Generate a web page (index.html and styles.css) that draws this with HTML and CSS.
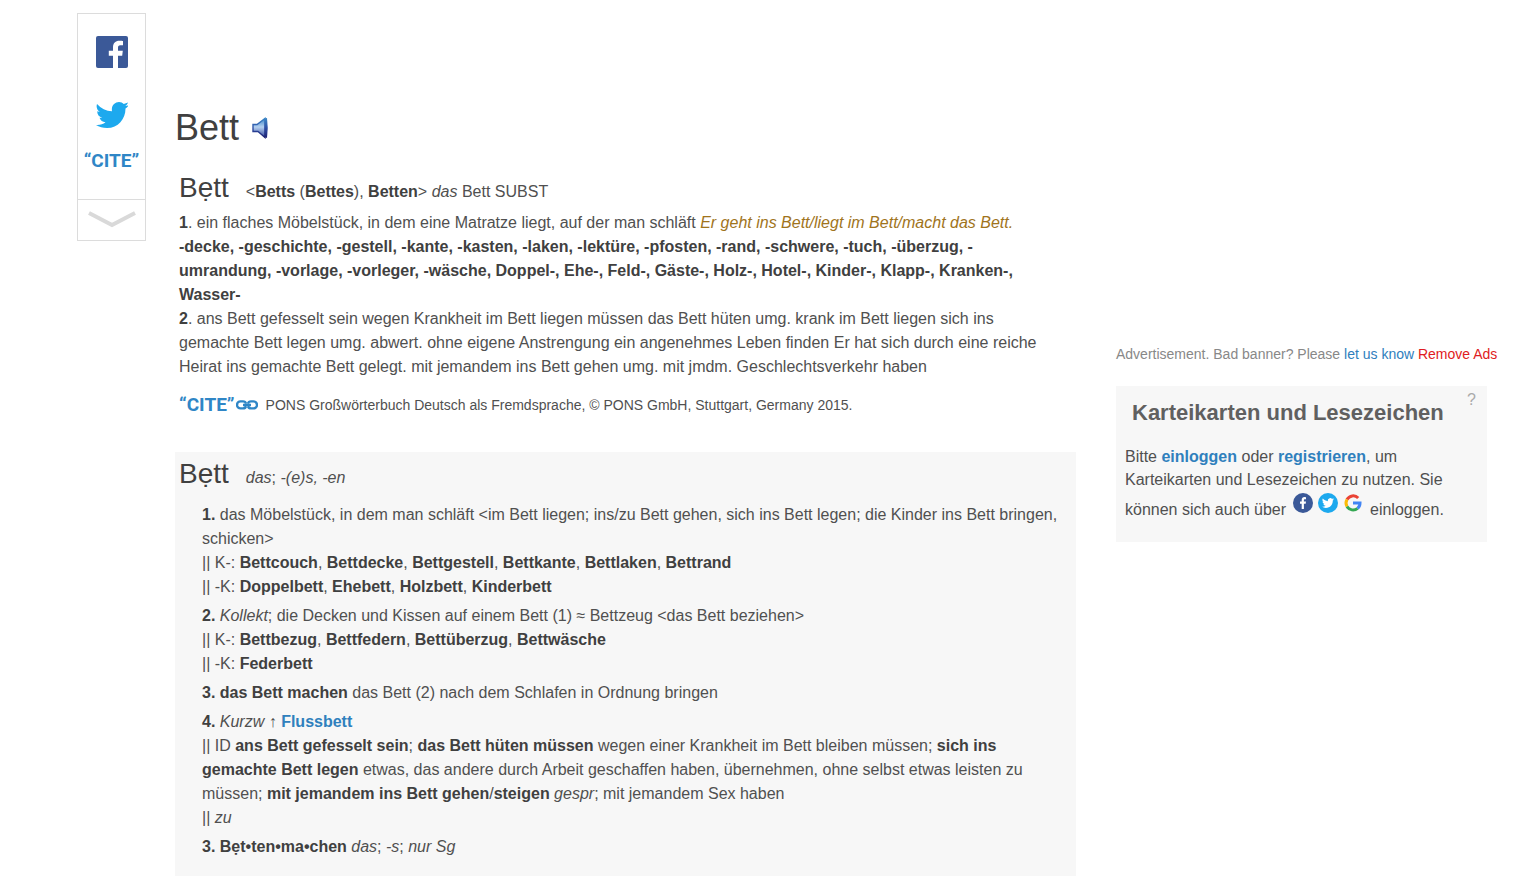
FILE: index.html
```html
<!DOCTYPE html>
<html lang="de">
<head>
<meta charset="utf-8">
<meta name="viewport" content="width=device-width, initial-scale=1">
<title>Bett</title>
<link rel="stylesheet" href="styles.css">
</head>
<body>
<svg width="0" height="0" class="defs" aria-hidden="true">
  <symbol id="bird" viewBox="0 0 24 24"><path d="M23.95 4.57a10 10 0 0 1-2.82.77 4.96 4.96 0 0 0 2.16-2.72c-.95.55-2 .96-3.13 1.18a4.92 4.92 0 0 0-8.38 4.48C7.69 8.1 4.07 6.13 1.64 3.16a4.93 4.93 0 0 0 1.52 6.57 4.9 4.9 0 0 1-2.23-.61v.06a4.92 4.92 0 0 0 3.95 4.83 5 5 0 0 1-2.21.08 4.94 4.94 0 0 0 4.6 3.42A9.87 9.87 0 0 1 0 19.54a14 14 0 0 0 7.55 2.21c9.05 0 14-7.5 14-13.98 0-.21 0-.42-.02-.63a9.94 9.94 0 0 0 2.42-2.57z"/></symbol>
</svg>
<div class="page">
  <nav class="share" aria-label="Teilen">
    <div class="share-main">
      <a href="#" class="share-link facebook" aria-label="Facebook"><svg width="32" height="32" viewBox="0 0 32 32"><rect width="32" height="32" rx="2" fill="#3b5998"/><path fill="#fff" d="M22 32V19.700h4.200l.6-4.900H22v-3.100c0-1.400.4-2.400 2.400-2.400H27V5c-.4-.1-2-.2-3.700-.2-3.700 0-6.300 2.300-6.300 6.400v3.600h-4.200v4.900H17V32z"/></svg></a>
      <a href="#" class="share-link twitter" aria-label="Twitter"><svg width="32" height="32" viewBox="0 0 32 32" fill="#1da9ee"><path d="M1 5c4 4.600 9 7 15 7.200C15 6.500 19 3 23 3c2 0 3.500.7 4.800 2L32 3.500c-.5 1.600-1.400 2.700-2.700 3.500l3.200-.6c-.8 1.300-1.700 2.200-3 3C29.500 20 22 29 11 29 6.800 29 3.200 28 0 26c3.800.3 7-.7 9.500-2.700-3-.2-5-1.800-6-4.500h2.700C3 18 1.200 15.500 1.200 12.300l2.600.8C1 11 0 8 1 5z"/></svg></a>
      <a href="#" class="cite">“CITE”</a>
    </div>
    <button class="share-more" aria-label="Mehr"><svg width="48" height="18" viewBox="0 0 48 18"><path d="M1 2l23 12L47 2" fill="none" stroke="#d9d9d9" stroke-width="4"/></svg></button>
  </nav>

  <main class="content">
    <h1 class="title">Bett <button class="sound" aria-label="Aussprache anhören"><svg width="17" height="22" viewBox="0 0 17 22"><defs><linearGradient id="spk" x1="0" y1="0" x2="0" y2="1"><stop offset="0" stop-color="#3b86c8"/><stop offset=".45" stop-color="#b4d0f0"/><stop offset="1" stop-color="#33469c"/></linearGradient><linearGradient id="rim" x1="0" y1="0" x2="0" y2="1"><stop offset="0" stop-color="#3a86c6"/><stop offset=".5" stop-color="#2f4fa5"/><stop offset="1" stop-color="#1b1f70"/></linearGradient></defs><path d="M1 7.500h4L13 1.500v19l-7-6H1z" fill="url(#spk)" stroke="url(#rim)" stroke-width="1.400"/><path d="M12.500 1.500L15 1q1.500 10 0 20l-2.500-1z" fill="url(#rim)"/></svg></button></h1>

    <section class="entry">
      <div class="entry-head"><h2 class="word">Bẹtt</h2><span>&lt;<b>Betts</b> (<b>Bettes</b>), <b>Betten</b>&gt; <i>das</i> Bett SUBST</span></div>
      <p class="sense"><b>1</b>. ein flaches Möbelstück, in dem eine Matratze liegt, auf der man schläft <i class="example">Er geht ins Bett/liegt im Bett/macht das Bett.</i><br>
      <b>-decke, -geschichte, -gestell, -kante, -kasten, -laken, -lektüre, -pfosten, -rand, -schwere, -tuch, -überzug, -<br>umrandung, -vorlage, -vorleger, -wäsche, Doppel-, Ehe-, Feld-, Gäste-, Holz-, Hotel-, Kinder-, Klapp-, Kranken-,<br>Wasser-</b></p>
      <p class="sense"><b>2</b>. ans Bett gefesselt sein wegen Krankheit im Bett liegen müssen das Bett hüten umg. krank im Bett liegen sich ins<br>gemachte Bett legen umg. abwert. ohne eigene Anstrengung ein angenehmes Leben finden Er hat sich durch eine reiche<br>Heirat ins gemachte Bett gelegt. mit jemandem ins Bett gehen umg. mit jmdm. Geschlechtsverkehr haben</p>
      <div class="source"><a href="#" class="cite">“CITE”</a><a href="#" class="chain" aria-label="Link"><svg width="22" height="10" viewBox="0 0 22 10" fill="none" stroke="#2f86c6" stroke-width="2.400"><path d="M10 3.500C9.600 2 8.500 1.400 7 1.400H4.500a3.500 3.500 0 0 0 0 7H7c1.500 0 2.600-.7 3-2M12 3.500c.4-1.500 1.500-2.100 3-2.100h2.500a3.500 3.500 0 0 1 0 7H15c-1.500 0-2.600-.7-3-2M7 5h8"/></svg></a><span>PONS Großwörterbuch Deutsch als Fremdsprache, © PONS GmbH, Stuttgart, Germany 2015.</span></div>
    </section>

    <section class="entry shaded">
      <div class="entry-head"><h2 class="word">Bẹtt</h2><span><i>das</i>; <i>-(e)s, -en</i></span></div>
      <div class="senses">
        <p class="sense"><b>1.</b> das Möbelstück, in dem man schläft &lt;im Bett liegen; ins/zu Bett gehen, sich ins Bett legen; die Kinder ins Bett bringen,<br>schicken&gt;<br>
        || K-: <b>Bettcouch</b>, <b>Bettdecke</b>, <b>Bettgestell</b>, <b>Bettkante</b>, <b>Bettlaken</b>, <b>Bettrand</b><br>
        || -K: <b>Doppelbett</b>, <b>Ehebett</b>, <b>Holzbett</b>, <b>Kinderbett</b></p>
        <p class="sense"><b>2.</b> <i>Kollekt</i>; die Decken und Kissen auf einem Bett (1) ≈ Bettzeug &lt;das Bett beziehen&gt;<br>
        || K-: <b>Bettbezug</b>, <b>Bettfedern</b>, <b>Bettüberzug</b>, <b>Bettwäsche</b><br>
        || -K: <b>Federbett</b></p>
        <p class="sense"><b>3. das Bett machen</b> das Bett (2) nach dem Schlafen in Ordnung bringen</p>
        <p class="sense"><b>4.</b> <i>Kurzw</i> ↑ <a href="#" class="strong-link">Flussbett</a><br>
        || ID <b>ans Bett gefesselt sein</b>; <b>das Bett hüten müssen</b> wegen einer Krankheit im Bett bleiben müssen; <b>sich ins<br>gemachte Bett legen</b> etwas, das andere durch Arbeit geschaffen haben, übernehmen, ohne selbst etwas leisten zu<br>müssen; <b>mit jemandem ins Bett gehen</b>/<b>steigen</b> <i>gespr</i>; mit jemandem Sex haben<br>
        || <i>zu</i></p>
        <p class="sense"><b>3. Bẹt•ten•ma•chen</b> <i>das</i>; <i>-s</i>; <i>nur Sg</i></p>
      </div>
    </section>
  </main>

  <aside class="side">
    <p class="ad">Advertisement. Bad banner? Please <a href="#">let us know</a> <a href="#" class="remove">Remove Ads</a></p>
    <section class="cards">
      <header class="cards-head"><h2>Karteikarten und Lesezeichen</h2><a href="#" class="help">?</a></header>
      <p>Bitte <a href="#" class="strong-link">einloggen</a> oder <a href="#" class="strong-link">registrieren</a>, um<br>Karteikarten und Lesezeichen zu nutzen. Sie</p>
      <div class="login"><span>können sich auch über</span>
        <span class="logos">
          <a href="#" aria-label="Facebook"><svg width="20" height="20" viewBox="0 0 20 20"><circle cx="10" cy="10" r="10" fill="#3b5998"/><path fill="#fff" d="M8.700 16v-5.300H7V8.500h1.700V7c0-1.900 1.100-2.900 2.800-2.900l1.500.1v2h-1c-.9 0-1.100.4-1.100 1.100v1.200H13l-.3 2.200h-1.800V16z"/></svg></a>
          <a href="#" aria-label="Twitter"><svg width="20" height="20" viewBox="0 0 20 20"><circle cx="10" cy="10" r="10" fill="#1da9ee"/><use href="#bird" x="4" y="4" width="12" height="12" fill="#fff"/></svg></a>
          <a href="#" aria-label="Google"><svg width="20" height="20" viewBox="0 0 20 20" fill="none" stroke-width="3"><path stroke="#ea4335" d="M4 6.500A7 7 0 0 1 15.200 5"/><path stroke="#fbbc05" d="M4 6.500a7 7 0 0 0 0 7"/><path stroke="#34a853" d="M4 13.500a7 7 0 0 0 10.600 1.800"/><path stroke="#4285f4" d="M10 10h7c0 2.200-.9 4.100-2.400 5.300"/></svg></a>
        </span><span>einloggen.</span></div>
    </section>
  </aside>
</div>
</body>
</html>
```

FILE: styles.css
```css
* { box-sizing: border-box; }
body {
  margin: 0;
  background: #fff;
  color: #505050;
  font: 16px/24px "Liberation Sans", Arial, sans-serif;
}
h1, h2, p { margin: 0; font-weight: normal; }
b { color: #404040; }
a { color: #2f80bd; text-decoration: none; }
button { padding: 0; border: 0; background: none; cursor: pointer; }
svg { display: block; }
.defs { position: absolute; }

.page {
  display: flex;
  align-items: flex-start;
  padding: 0 49px 0 77px;
  height: 100vh;
  overflow: hidden;
}

.share {
  flex: none;
  width: 69px;
  margin-top: 13px;
  border: 1px solid #dcdcdc;
}
.share-main {
  display: flex;
  flex-direction: column;
  align-items: center;
  padding: 22px 0 26px;
}
.twitter { margin: 31px 0 18px; }
.cite {
  color: #2f86c6;
  font: bold 19px/24px "Roboto", "Liberation Sans", sans-serif;
}
.share-more {
  display: flex;
  align-items: center;
  justify-content: center;
  width: 100%;
  height: 41px;
  border-top: 1px solid #dcdcdc;
}

.content {
  flex: 1;
  min-width: 0;
  margin-left: 29px;
  padding-top: 104px;
}
.title {
  display: flex;
  align-items: center;
  gap: 13px;
  color: #404040;
  font-size: 36px;
  line-height: 48px;
}
.entry { padding: 0 4px; }
.entry-head {
  display: flex;
  align-items: baseline;
  gap: 17px;
}
.word {
  color: #404040;
  font-size: 28px;
  line-height: 40px;
}
.entry > .entry-head { padding-top: 16px; margin-bottom: 3px; }
.example { color: #a0741c; }
.source {
  display: flex;
  align-items: center;
  margin-top: 14px;
  font-size: 14px;
}
.chain { margin: 0 8px 0 1px; }
.shaded {
  margin-top: 35px;
  padding-bottom: 32px;
  background: #f7f7f7;
}
.shaded > .entry-head { padding-top: 2px; margin-bottom: 9px; }
.senses {
  display: grid;
  gap: 5px;
  padding-left: 23px;
}
.sense { white-space: nowrap; }

.side {
  flex: none;
  width: 371px;
  margin-left: 40px;
  padding-top: 342px;
}
.ad { color: #888; font-size: 14px; white-space: nowrap; }
.ad .remove { color: #e01b22; }
.cards {
  margin-top: 20px;
  padding: 0 9px 15px;
  background: #f7f7f7;
  line-height: 23px;
}
.cards-head {
  display: flex;
  justify-content: space-between;
  padding: 2px 2px 18px 7px;
}
.cards-head h2 {
  padding-top: 11px;
  color: #606060;
  font-size: 22px;
  font-weight: bold;
  line-height: 28px;
}
.help { color: #aaa; }
.strong-link { font-weight: bold; }
.login { display: flex; align-items: center; gap: 7px; height: 36px; }
.logos { display: flex; gap: 5px; padding-bottom: 12px; }
```
